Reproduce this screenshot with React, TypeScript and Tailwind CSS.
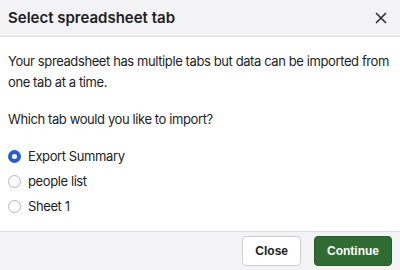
import React, { useState } from "react";

const tabs = ["Export Summary", "people list", "Sheet 1"];

export default function App() {
  const [selected, setSelected] = useState("Export Summary");

  return (
    <div className="w-[400px] h-[270px] flex flex-col bg-white text-[#1d1d1f] font-['Inter',sans-serif]">
      {/* header */}
      <div className="h-[37px] flex items-center justify-between pl-2 pr-[12px] bg-[#f3f3f5] border-b border-[#dcdcdf]">
        <h2 className="text-[15px] font-semibold">Select spreadsheet tab</h2>
        <button className="text-[#333]">
          <svg width="14" height="14" viewBox="0 0 14 14" fill="none">
            <path d="M2.5 2.5l9 9M11.5 2.5l-9 9" stroke="currentColor" strokeWidth="1.7" strokeLinecap="round" />
          </svg>
        </button>
      </div>

      {/* body */}
      <div className="flex-1 px-2 pt-[14px] text-[13px] tracking-[-0.4px] leading-[21px]">
        <p>
          Your spreadsheet has multiple tabs but data can be imported from one tab at a time.
        </p>
        <p className="mt-[16px]">Which tab would you like to import?</p>
        <div className="mt-[14px] flex flex-col">
          {tabs.map((t) => (
            <label key={t} className="h-[25px] flex items-center gap-[7px] cursor-pointer" onClick={() => setSelected(t)}>
              {selected === t ? (
                <span className="w-[13px] h-[13px] rounded-full border-[4px] border-[#2b5bd7] bg-white" />
              ) : (
                <span className="w-[13px] h-[13px] rounded-full border border-[#b5b5b5] bg-white" />
              )}
              <span>{t}</span>
            </label>
          ))}
        </div>
      </div>

      {/* footer */}
      <div className="h-[39px] flex items-center justify-end gap-[13px] pr-2 bg-[#f3f3f5] border-t border-[#dcdcdf] font-['Liberation_Sans',sans-serif] font-bold text-[12px]">
        <button className="h-[30px] px-[12px] rounded-[4px] bg-white border border-[#cfcfd3] text-[#222]">Close</button>
        <button className="h-[30px] px-[12px] rounded-[4px] bg-[#2f6b32] border border-[#285c2b] text-white">Continue</button>
      </div>
    </div>
  );
}
